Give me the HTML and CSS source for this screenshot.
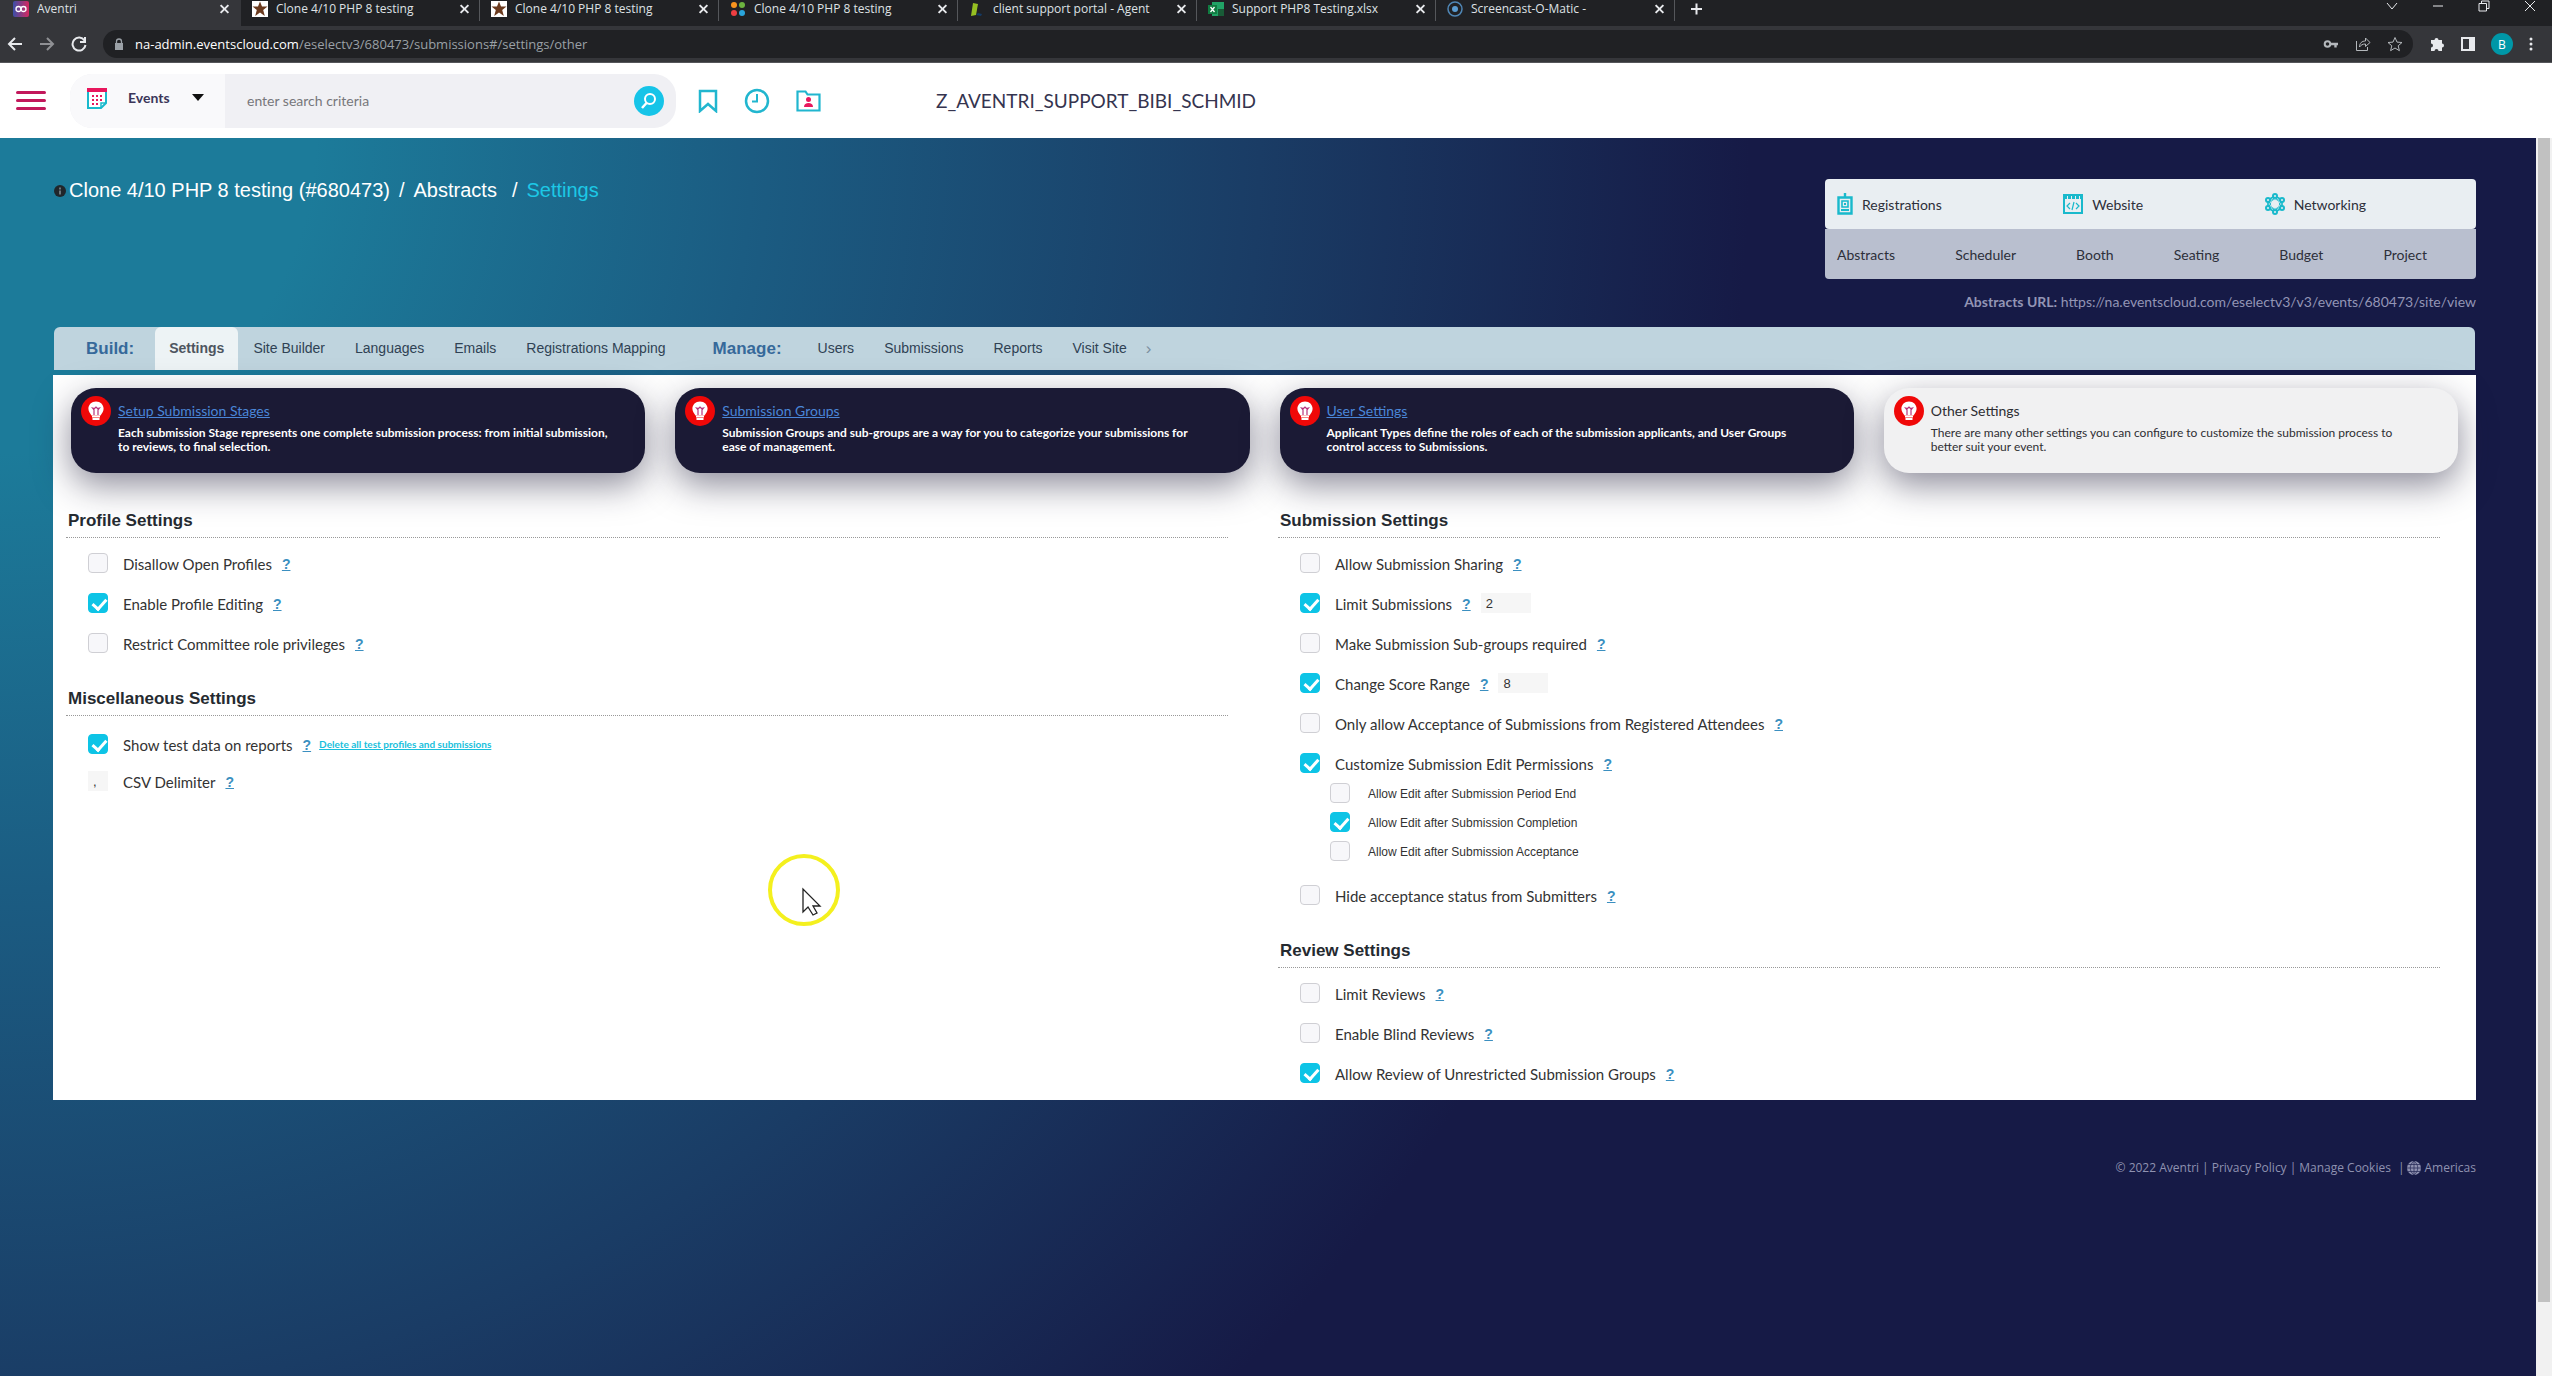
FILE: index.html
```html
<!DOCTYPE html>
<html lang="en">
<head>
    <meta charset="UTF-8">
    <title>Aventri</title>
    <link rel="stylesheet" href="styles.css">
</head>
<body>
    <svg class="defs" width="0" height="0">
        <symbol id="bulb" viewBox="0 0 30 30">
            <circle cx="15" cy="15" r="15" fill="#f00808"/>
            <path d="M15 5.500c-4.400 0-7.600 3.200-7.600 7.200 0 3.100 2 4.600 3 6.700h9.200c1-2.100 3-3.600 3-6.700 0-4-3.200-7.200-7.600-7.200z" fill="#fff"/>
            <path d="M11 20.500h8M11.500 23h7" stroke="#fff" stroke-width="1.800"/>
            <path d="M13 19v-5l-1.500-2 2 .5 1.500-1.500 1.500 1.500 2-.5-1.500 2v5" fill="none" stroke="#b8327c" stroke-width="1.200"/>
        </symbol>
        <symbol id="star" viewBox="0 0 16 16">
            <rect width="16" height="16" fill="#fff"/>
            <path d="M8 .5l2 5h5.500l-4.300 3.500 1.600 6L8 11.500 3.200 15l1.600-6L.5 5.500H6z" fill="#6b3a1e"/>
        </symbol>
    </svg>

    <!-- browser -->
    <div class="browser">
        <div class="tabs">
            <div class="tab active">
                <svg width="16" height="16" viewBox="0 0 16 16"><defs><linearGradient id="fav"><stop stop-color="#3b4fa8"/><stop offset="1" stop-color="#d4285f"/></linearGradient></defs><rect width="16" height="16" rx="2" fill="url(#fav)"/><g fill="none" stroke="#fff" stroke-width="1.300"><circle cx="5.500" cy="8" r="2.500"/><circle cx="10.500" cy="8" r="2.500"/></g></svg>
                <span>Aventri</span><button class="close" aria-label="Close tab"></button>
            </div>
            <div class="tab"><svg width="16" height="16"><use href="#star"/></svg><span>Clone 4/10 PHP 8 testing</span><button class="close" aria-label="Close tab"></button></div>
            <div class="tab"><svg width="16" height="16"><use href="#star"/></svg><span>Clone 4/10 PHP 8 testing</span><button class="close" aria-label="Close tab"></button></div>
            <div class="tab">
                <svg width="16" height="16" viewBox="0 0 16 16"><circle cx="4" cy="4" r="3" fill="#f7931e"/><circle cx="12" cy="4" r="3" fill="#6cb33f"/><circle cx="4" cy="12" r="3" fill="#ee3e42"/><circle cx="12" cy="12" r="3" fill="#2aa5dc"/></svg>
                <span>Clone 4/10 PHP 8 testing</span><button class="close" aria-label="Close tab"></button>
            </div>
            <div class="tab">
                <svg width="16" height="16" viewBox="0 0 16 16"><path d="M4 2l5 1-2 11-5 1z" fill="#95bf22"/><path d="M9 12l4 1-1 2-5-1z" fill="#143a63"/></svg>
                <span>client support portal - Agent</span><button class="close" aria-label="Close tab"></button>
            </div>
            <div class="tab">
                <svg width="16" height="16" viewBox="0 0 16 16"><path d="M4 1h12v14H4z" fill="#21a366"/><path d="M10 8h6v7h-6z" fill="#185c37"/><path d="M0 4h9v9H0z" fill="#107c41"/><path d="M2.500 6l4 5M6.500 6l-4 5" stroke="#fff" stroke-width="1.300"/></svg>
                <span>Support PHP8 Testing.xlsx</span><button class="close" aria-label="Close tab"></button>
            </div>
            <div class="tab">
                <svg width="16" height="16" viewBox="0 0 16 16"><circle cx="8" cy="8" r="7" fill="none" stroke="#4f86b5" stroke-width="1.500"/><circle cx="8" cy="8" r="3" fill="#5a9bd0"/></svg>
                <span>Screencast-O-Matic -</span><button class="close" aria-label="Close tab"></button>
            </div>
            <button class="new-tab" aria-label="New tab"></button>
            <div class="window-buttons">
                <button aria-label="Search tabs"><svg width="12" height="12" viewBox="0 0 12 12"><path d="M1 3l5 6 5-6"/></svg></button>
                <button aria-label="Minimize"><svg width="12" height="12" viewBox="0 0 12 12"><path d="M1 6h10"/></svg></button>
                <button aria-label="Restore"><svg width="12" height="12" viewBox="0 0 12 12"><path d="M1 3.500h7.500V11H1zM3.500 3.500V1H11v7.500H8.500"/></svg></button>
                <button aria-label="Close"><svg width="12" height="12" viewBox="0 0 12 12"><path d="M1 1l10 10M11 1L1 11"/></svg></button>
            </div>
        </div>
        <div class="toolbar">
            <button aria-label="Back"><svg width="16" height="16" viewBox="0 0 16 16"><path d="M15 8H2M8 2L2 8l6 6"/></svg></button>
            <button aria-label="Forward" class="dim"><svg width="16" height="16" viewBox="0 0 16 16"><path d="M1 8h13M8 2l6 6-6 6"/></svg></button>
            <button aria-label="Reload"><svg width="16" height="16" viewBox="0 0 16 16"><path d="M13.500 4.500A6.500 6.500 0 1 0 14.500 9M14 1v5H9"/></svg></button>
            <div class="omnibox">
                <svg class="lock" width="10" height="12" viewBox="0 0 10 12"><path d="M1 5h8v7H1z" fill="#9aa0a6"/><path d="M2.500 5V3.500a2.500 2.500 0 0 1 5 0V5" fill="none" stroke="#9aa0a6" stroke-width="1.300"/></svg>
                <span class="url">na-admin.eventscloud.com<i>/eselectv3/680473/submissions#/settings/other</i></span>
                <svg width="16" height="16" viewBox="0 0 16 16"><circle cx="4.500" cy="8" r="2.800" stroke-width="2"/><path d="M7.500 8H15M12.500 8v3.500" stroke-width="2.400"/></svg>
                <svg width="16" height="16" viewBox="0 0 16 16"><path d="M1.500 5v9.500h11V11M4.500 11c0-4 2.500-6 6-6V2l4.500 4.500-4.500 4V8c-3 0-4.500 1-6 3z"/></svg>
                <svg width="16" height="16" viewBox="0 0 16 16"><path d="M8 1.500l2 4.600 5 .4-3.800 3.300 1.200 4.900L8 12l-4.400 2.700 1.200-4.900L1 6.500l5-.4z"/></svg>
            </div>
            <button aria-label="Extensions"><svg width="16" height="16" viewBox="0 0 16 16"><path d="M2 4h3.500a2 2 0 1 1 4 0H13v3.500a2 2 0 1 1 0 4V15H9.500a2 2 0 1 0-4 0H2v-3.500a2 2 0 1 0 0-4z" fill="#e8eaed" stroke="none"/></svg></button>
            <button aria-label="Side panel"><svg width="14" height="14" viewBox="0 0 14 14"><path d="M1 1h12v12H1z"/><path d="M9 1h4v12H9z" fill="#e8eaed"/></svg></button>
            <button aria-label="Profile" class="avatar">B</button>
            <button aria-label="Menu"><svg width="4" height="14" viewBox="0 0 4 14"><g fill="#e8eaed" stroke="none"><circle cx="2" cy="2" r="1.500"/><circle cx="2" cy="7" r="1.500"/><circle cx="2" cy="12" r="1.500"/></g></svg></button>
        </div>
    </div>

    <!-- app header -->
    <header class="header">
        <button class="hamburger" aria-label="Menu"><b></b><b></b><b></b></button>
        <form class="search">
            <button type="button" class="scope">
                <svg width="20" height="22" viewBox="0 0 20 22"><path d="M1 5v16h13l5-5V5" fill="#fff" stroke="#19b9cc" stroke-width="2"/><path d="M0 1h20v4H0z" fill="#e8175d"/><path d="M14 21v-5h5" fill="none" stroke="#19b9cc" stroke-width="1.500"/><path d="M5 9h2M9 9h2M13 9h2M5 13h2M9 13h2M13 13h2M5 17h2M9 17h2" stroke="#e8175d" stroke-width="2"/></svg>
                <span>Events</span>
                <i class="caret"></i>
            </button>
            <input type="text" placeholder="enter search criteria" aria-label="Search">
            <button type="button" class="go" aria-label="Search"><svg width="30" height="30" viewBox="0 0 30 30"><circle cx="16" cy="13" r="5" fill="none" stroke="#fff" stroke-width="2"/><path d="M12.500 17L8 22" stroke="#fff" stroke-width="2.500"/></svg></button>
        </form>
        <nav class="shortcuts">
            <a href="#" aria-label="Bookmarks"><svg width="20" height="24" viewBox="0 0 20 24"><path d="M2 2h16v20l-8-7-8 7z" fill="none" stroke="#21b6cf" stroke-width="2.500"/></svg></a>
            <a href="#" aria-label="Recent"><svg width="26" height="26" viewBox="0 0 26 26"><circle cx="13" cy="13" r="11" fill="none" stroke="#21b6cf" stroke-width="2.500"/><path d="M13 6v7.500H8" fill="none" stroke="#21b6cf" stroke-width="2"/></svg></a>
            <a href="#" aria-label="My folder"><svg width="25" height="22" viewBox="0 0 25 22"><path d="M1.500 1.500h8l2 3h12v16h-22z" fill="none" stroke="#21b6cf" stroke-width="2.200"/><circle cx="12.500" cy="9.500" r="2.500" fill="#e8175d"/><path d="M8 17c0-3 2-4 4.500-4s4.500 1 4.500 4z" fill="#e8175d"/></svg></a>
        </nav>
        <div class="account">Z_AVENTRI_SUPPORT_BIBI_SCHMID</div>
    </header>

    <div class="viewport">
        <main class="page">
            <div class="top">
                <div class="breadcrumb">
                    <svg width="12" height="12" viewBox="0 0 12 12"><circle cx="6" cy="6" r="6" fill="#20262b"/><path d="M6 2.500v2M6 5.500v4" stroke="#7e8b90" stroke-width="1.600"/></svg>
                    <a href="#">Clone 4/10 PHP 8 testing (#680473)</a>
                    <span class="slash">/</span>
                    <a href="#">Abstracts</a>
                    <span class="slash last">/</span>
                    <span class="current">Settings</span>
                </div>
                <div class="products">
                    <div class="products-main">
                        <a href="#"><svg width="16" height="22" viewBox="0 0 16 22"><path d="M1.500 4.500h13v16h-13zM8 0v4" fill="none" stroke="#19b9cc" stroke-width="2.400"/><path d="M5 8h6v6H5z" fill="none" stroke="#19b9cc" stroke-width="1.600"/><path d="M7 11h2M4 17h8" stroke="#19b9cc" stroke-width="2"/></svg>Registrations</a>
                        <a href="#"><svg width="20" height="20" viewBox="0 0 20 20"><path d="M1 1h18v18H1z" fill="none" stroke="#19b9cc" stroke-width="2"/><path d="M1 3.500h18" stroke="#19b9cc" stroke-width="3" stroke-dasharray="3 1"/><path d="M7 9l-3 3 3 3M13 9l3 3-3 3M11 8l-2 8" fill="none" stroke="#19b9cc" stroke-width="1.200"/></svg>Website</a>
                        <a href="#"><svg width="20" height="22" viewBox="0 0 20 22"><g fill="none" stroke="#19b9cc" stroke-width="1.700"><path d="M10 3l7 4v8l-7 4-7-4V7z"/><path d="M10 3l-7 12h14zM10 19L3 7h14z" stroke-width="1"/></g><g fill="#19b9cc"><circle cx="10" cy="3" r="3"/><circle cx="17" cy="7" r="3"/><circle cx="17" cy="15" r="3"/><circle cx="10" cy="19" r="3"/><circle cx="3" cy="15" r="3"/><circle cx="3" cy="7" r="3"/></g><g fill="#e9eef2"><circle cx="10" cy="3" r="1"/><circle cx="17" cy="7" r="1"/><circle cx="17" cy="15" r="1"/><circle cx="10" cy="19" r="1"/><circle cx="3" cy="15" r="1"/><circle cx="3" cy="7" r="1"/><circle cx="10" cy="11" r="4"/></g></svg>Networking</a>
                    </div>
                    <div class="products-sub">
                        <a href="#">Abstracts</a>
                        <a href="#">Scheduler</a>
                        <a href="#">Booth</a>
                        <a href="#">Seating</a>
                        <a href="#">Budget</a>
                        <a href="#">Project</a>
                    </div>
                    <p class="site-url"><b>Abstracts URL:</b> <a href="#">https://na.eventscloud.com/eselectv3/v3/events/680473/site/view</a></p>
                </div>
            </div>

            <nav class="menu">
                <strong>Build:</strong>
                <a href="#" class="active">Settings</a>
                <a href="#">Site Builder</a>
                <a href="#">Languages</a>
                <a href="#">Emails</a>
                <a href="#">Registrations Mapping</a>
                <strong>Manage:</strong>
                <a href="#">Users</a>
                <a href="#">Submissions</a>
                <a href="#">Reports</a>
                <a href="#">Visit Site</a>
                <a href="#" class="more" aria-label="More">›</a>
            </nav>

            <div class="panel">
                <div class="cards">
                    <div class="card">
                        <svg width="30" height="30"><use href="#bulb"/></svg>
                        <div><a href="#" class="card-title">Setup Submission Stages</a>
                        <p>Each submission Stage represents one complete submission process: from initial submission,<br>to reviews, to final selection.</p></div>
                    </div>
                    <div class="card">
                        <svg width="30" height="30"><use href="#bulb"/></svg>
                        <div><a href="#" class="card-title">Submission Groups</a>
                        <p>Submission Groups and sub-groups are a way for you to categorize your submissions for<br>ease of management.</p></div>
                    </div>
                    <div class="card">
                        <svg width="30" height="30"><use href="#bulb"/></svg>
                        <div><a href="#" class="card-title">User Settings</a>
                        <p>Applicant Types define the roles of each of the submission applicants, and User Groups<br>control access to Submissions.</p></div>
                    </div>
                    <div class="card current">
                        <svg width="30" height="30"><use href="#bulb"/></svg>
                        <div><span class="card-title">Other Settings</span>
                        <p>There are many other settings you can configure to customize the submission process to<br>better suit your event.</p></div>
                    </div>
                </div>

                <div class="columns">
                    <section>
                        <h2>Profile Settings</h2>
                        <div class="row"><input type="checkbox" id="open"><label for="open">Disallow Open Profiles</label><a href="#" class="help">?</a></div>
                        <div class="row"><input type="checkbox" id="editing" checked><label for="editing">Enable Profile Editing</label><a href="#" class="help">?</a></div>
                        <div class="row"><input type="checkbox" id="committee"><label for="committee">Restrict Committee role privileges</label><a href="#" class="help">?</a></div>

                        <h2 class="misc">Miscellaneous Settings</h2>
                        <div class="row"><input type="checkbox" id="testdata" checked><label for="testdata">Show test data on reports</label><a href="#" class="help">?</a><a href="#" class="delete">Delete all test profiles and submissions</a></div>
                        <div class="row csv"><input type="text" id="csv" value=","><label for="csv">CSV Delimiter</label><a href="#" class="help">?</a></div>
                    </section>
                    <section>
                        <h2>Submission Settings</h2>
                        <div class="row"><input type="checkbox" id="sharing"><label for="sharing">Allow Submission Sharing</label><a href="#" class="help">?</a></div>
                        <div class="row"><input type="checkbox" id="limit" checked><label for="limit">Limit Submissions</label><a href="#" class="help">?</a><input type="text" class="value" value="2" aria-label="Submission limit"></div>
                        <div class="row"><input type="checkbox" id="subgroups"><label for="subgroups">Make Submission Sub-groups required</label><a href="#" class="help">?</a></div>
                        <div class="row"><input type="checkbox" id="score" checked><label for="score">Change Score Range</label><a href="#" class="help">?</a><input type="text" class="value" value="8" aria-label="Score range"></div>
                        <div class="row"><input type="checkbox" id="attendees"><label for="attendees">Only allow Acceptance of Submissions from Registered Attendees</label><a href="#" class="help">?</a></div>
                        <div class="row"><input type="checkbox" id="permissions" checked><label for="permissions">Customize Submission Edit Permissions</label><a href="#" class="help">?</a></div>
                        <div class="sub">
                            <div class="row"><input type="checkbox" id="period"><label for="period">Allow Edit after Submission Period End</label></div>
                            <div class="row"><input type="checkbox" id="completion" checked><label for="completion">Allow Edit after Submission Completion</label></div>
                            <div class="row"><input type="checkbox" id="acceptance"><label for="acceptance">Allow Edit after Submission Acceptance</label></div>
                        </div>
                        <div class="row"><input type="checkbox" id="hide"><label for="hide">Hide acceptance status from Submitters</label><a href="#" class="help">?</a></div>

                        <h2>Review Settings</h2>
                        <div class="row"><input type="checkbox" id="reviews"><label for="reviews">Limit Reviews</label><a href="#" class="help">?</a></div>
                        <div class="row"><input type="checkbox" id="blind"><label for="blind">Enable Blind Reviews</label><a href="#" class="help">?</a></div>
                        <div class="row"><input type="checkbox" id="unrestricted" checked><label for="unrestricted">Allow Review of Unrestricted Submission Groups</label><a href="#" class="help">?</a></div>
                    </section>
                </div>
            </div>

            <footer class="footer">
                <span>© 2022 Aventri</span> | <a href="#">Privacy Policy</a> | <a href="#">Manage Cookies</a> <span class="bar">|</span>
                <svg width="14" height="14" viewBox="0 0 14 14"><circle cx="7" cy="7" r="7" fill="#8f92b1"/><path d="M0 7h14M1 3.500h12M1 10.500h12M7 0v14M7 0C2 4 2 10 7 14M7 0c5 4 5 10 0 14" fill="none" stroke="#2b2f5c" stroke-width=".8"/></svg>
                <a href="#">Americas</a>
            </footer>
        </main>
        <div class="scrollbar"><div class="thumb"></div></div>
    </div>

    <!-- mouse pointer -->
    <svg class="pointer" width="76" height="76" viewBox="0 0 76 76"><circle cx="38" cy="38" r="34" fill="none" stroke="#f4f01e" stroke-width="4"/><path d="M37 37v23l5-5 5 8 4-2-4-7h7z" fill="#fff" stroke="#222" stroke-width="1.300"/></svg>
</body>
</html>
```
FILE: styles.css
```css
* {
    box-sizing: border-box;
}

body {
    margin: 0;
    min-height: 100vh;
    display: flex;
    flex-direction: column;
    position: relative;
    font-family: Lato, sans-serif;
    font-size: 15px;
    color: #333;
    background: #fff;
}

a {
    color: inherit;
    text-decoration: none;
}

button {
    border: 0;
    padding: 0;
    background: none;
    font: inherit;
    color: inherit;
}

svg {
    display: block;
    flex: none;
}

.defs {
    position: absolute;
}

/* browser */
.browser {
    background: #35363a;
    color: #dfe1e5;
    font-family: "Open Sans", sans-serif;
    font-size: 12px;
    border-bottom: 1px solid #55565a;
}

.tabs {
    display: flex;
    height: 26px;
    background: #202124;
}

.tab {
    flex: 0 1 239px;
    display: flex;
    gap: 8px;
    padding: 1px 9px 0 11px;
    border-right: 1px solid #55575b;
    height: 21px;
    line-height: 16px;
}

.tab span {
    flex: 1;
    white-space: nowrap;
    overflow: hidden;
}

.tab.active {
    flex-basis: 241px;
    height: 26px;
    background: #35363a;
    border-right: 0;
    padding: 1px 11px 0 13px;
}

.close,
.new-tab {
    position: relative;
    width: 11px;
    height: 16px;
}

.close::before,
.close::after,
.new-tab::before,
.new-tab::after {
    content: "";
    position: absolute;
    left: 0;
    top: 7px;
    width: 11px;
    height: 2px;
    background: #e8eaed;
    transform: rotate(45deg);
}

.close::after {
    transform: rotate(-45deg);
}

.new-tab {
    margin: 1px 0 0 16px;
}

.new-tab::before {
    transform: none;
}

.new-tab::after {
    transform: rotate(90deg);
}

.window-buttons {
    margin-left: auto;
    margin-right: 16px;
    display: flex;
    gap: 34px;
    height: 12px;
}

.window-buttons path {
    fill: none;
    stroke: #e8eaed;
}

.toolbar {
    display: flex;
    align-items: center;
    gap: 16px;
    padding: 4px 19px 4px 7px;
}

.toolbar svg {
    fill: none;
    stroke: #e8eaed;
    stroke-width: 2;
}

.toolbar .dim {
    opacity: .5;
}

.omnibox {
    flex: 1;
    display: flex;
    align-items: center;
    gap: 16px;
    height: 28px;
    padding: 0 10px 0 11px;
    border-radius: 14px;
    background: #202124;
    font-size: 13px;
}

.omnibox svg {
    stroke: #b4b8bc;
    stroke-width: 1;
}

.omnibox .lock {
    stroke: none;
}

.url {
    flex: 1;
    color: #fff;
    margin-left: -5px;
}

.url i {
    font-style: normal;
    color: #9aa0a6;
}

.avatar {
    width: 22px;
    height: 22px;
    border-radius: 50%;
    background: #0097a7;
    color: #fff;
}

/* app header */
.header {
    display: flex;
    align-items: center;
    height: 75px;
    padding-left: 16px;
    background: #fff;
}

.hamburger {
    width: 30px;
    display: grid;
    gap: 5px;
}

.hamburger b {
    height: 3px;
    border-radius: 2px;
    background: #c2185b;
}

.search {
    display: flex;
    align-items: center;
    width: 606px;
    height: 54px;
    margin-left: 24px;
    padding-right: 12px;
    border-radius: 22px;
    background: #f0f0f4;
    overflow: hidden;
}

.scope {
    display: flex;
    align-items: center;
    width: 155px;
    height: 54px;
    padding: 0 0 6px 17px;
    background: #f9f9fb;
    color: #3b3659;
    font-size: 14px;
    font-weight: bold;
}

.scope span {
    margin-left: 21px;
}

.caret {
    margin-left: auto;
    margin-right: 21px;
    border: 6px solid transparent;
    border-top: 7px solid #111;
    border-bottom: 0;
}

.search input {
    flex: 1;
    border: 0;
    padding: 0 22px;
    background: none;
    font: inherit;
    font-size: 14px;
}

.search input::placeholder {
    color: #77777b;
}

.go {
    border-radius: 50%;
    background: #16c4e8;
}

.shortcuts {
    display: flex;
    align-items: center;
    gap: 26px;
    margin-left: 22px;
}

.account {
    margin-left: 115px;
    font-size: 19px;
    color: #35344f;
}

/* page */
.viewport {
    flex: 1;
    display: flex;
}

.page {
    flex: 1;
    padding: 41px 60px 40px 53px;
    background: radial-gradient(circle 1750px at 0 0, #1c7b9a 0, #1c7b9a 18%, #1b5c82 43%, #1a3c65 72%, #161a46 100%);
}

.scrollbar {
    width: 16px;
    padding: 0 2px;
    background: #f1f1f1;
}

.thumb {
    height: 94%;
    background: #c1c1c1;
}

.top {
    display: flex;
    justify-content: space-between;
    align-items: flex-start;
}

.breadcrumb {
    display: flex;
    align-items: center;
    font: 20px/22px "Liberation Sans", Arial, sans-serif;
    color: #fff;
}

.breadcrumb svg {
    margin: 2px 3px 0 1px;
}

.slash {
    margin: 0 9px;
}

.slash.last {
    margin-left: 15px;
}

.breadcrumb .current {
    color: #1cc8e6;
}

.products {
    width: 651px;
    font-size: 14px;
}

.products-main,
.products-sub {
    display: flex;
    align-items: center;
    justify-content: space-between;
    height: 50px;
    padding: 0 12px;
    color: #2d2f3a;
}

.products-main {
    padding-right: 110px;
    border-radius: 4px;
    background: #e9eef2;
}

.products-main a {
    display: flex;
    align-items: center;
    gap: 9px;
}

.products-sub {
    padding-right: 49px;
    border-radius: 0 0 4px 4px;
    background: #b9bfcf;
}

.site-url {
    margin: 13px 0 15px;
    line-height: 20px;
    text-align: right;
    color: #9395b5;
}

.menu {
    display: flex;
    align-items: center;
    height: 43px;
    margin: 0 1px 5px;
    border-radius: 6px 6px 0 0;
    background: #bfd4de;
    font: 14px "Liberation Sans", Arial, sans-serif;
    color: #2f4254;
}

.menu a {
    padding: 0 15px;
    line-height: 43px;
}

.menu .active {
    padding: 0 14px;
    border-radius: 6px 6px 0 0;
    background: #edf3f5;
    font-weight: bold;
    color: #4e5560;
}

.menu strong {
    margin: 0 21px 0 32px;
    font-size: 17px;
    color: #36699a;
}

.menu .more {
    padding: 0 4px;
    font-size: 17px;
    color: #7c8f9f;
}

.panel {
    padding: 13px 18px 7px;
    background: #fff;
}

.cards {
    display: grid;
    grid-template-columns: repeat(4, 1fr);
    gap: 30px;
}

.card {
    display: flex;
    gap: 7px;
    height: 85px;
    padding: 8px 10px;
    border-radius: 25px;
    background: #1b1a35;
    color: #fff;
    box-shadow: 0 12px 35px rgba(27, 26, 53, .5);
}

.card p {
    margin: 6px 0 0;
    font-size: 12px;
    font-weight: bold;
    line-height: 14px;
    white-space: nowrap;
}

.card-title {
    display: block;
    margin-top: 6px;
    line-height: 18px;
    font-size: 14px;
}

a.card-title {
    color: #4a86d8;
    text-decoration: underline;
}

.card.current {
    background: #f1f1f2;
    color: #2e2e33;
}

.card.current p {
    font-weight: normal;
}

.columns {
    display: grid;
    grid-template-columns: 1fr 1fr;
    gap: 50px;
    margin: 38px 18px 0 -5px;
}

h2 {
    margin: 26px 0 5px;
    padding: 0 2px 6px;
    border-bottom: 1px dotted #999;
    font: bold 17px/20px "Liberation Sans", Arial, sans-serif;
    color: #252a30;
}

h2:first-child {
    margin-top: 0;
}

h2.misc {
    margin-bottom: 8px;
}

.row {
    display: flex;
    align-items: center;
    height: 40px;
    padding-left: 22px;
}

.row label {
    margin-left: 15px;
    padding-top: 2px;
}

input[type="checkbox"] {
    appearance: none;
    position: relative;
    width: 20px;
    height: 20px;
    margin: 0;
    border: 1px solid #cfcfd4;
    border-radius: 4px;
    background: #f7f7fa;
}

input[type="checkbox"]:checked {
    border-color: #0dc4e6;
    background: #0dc4e6;
}

input[type="checkbox"]:checked::after {
    content: "";
    position: absolute;
    left: 6px;
    top: 2px;
    width: 6px;
    height: 11px;
    border: solid #fff;
    border-width: 0 3px 3px 0;
    transform: rotate(42deg);
}

.help {
    margin-left: 10px;
    padding-top: 2px;
    font: bold 14px "Liberation Sans", Arial, sans-serif;
    color: #3b8fc0;
    text-decoration: underline;
}

.delete {
    margin-left: 8px;
    font-size: 10px;
    font-weight: bold;
    color: #19bfdc;
    text-decoration: underline;
}

.row input[type="text"] {
    width: 20px;
    height: 20px;
    padding: 0 5px;
    border: 0;
    background: #f6f6f6;
    color: #333;
    font: 13px "Liberation Sans", Arial, sans-serif;
}

.row input.value {
    width: 50px;
    margin-left: 10px;
}

.csv {
    height: 34px;
}

.sub {
    margin: -5px 0 10px 30px;
    font: 12px "Liberation Sans", Arial, sans-serif;
}

.sub .row {
    height: 29px;
}

.sub label {
    margin-left: 18px;
}

.footer {
    display: flex;
    align-items: center;
    justify-content: flex-end;
    gap: 3px;
    margin-top: 59px;
    font: 12px/18px "Open Sans", sans-serif;
    color: #8f92b1;
}

.footer .bar {
    margin-left: 4px;
}

.pointer {
    position: absolute;
    left: 766px;
    top: 852px;
}
```
